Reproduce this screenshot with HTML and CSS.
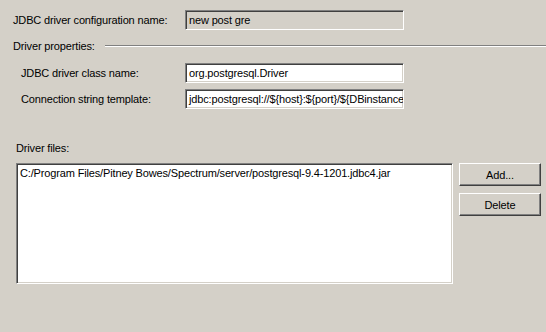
FILE: index.html
```html
<!DOCTYPE html>
<html>
<head>
<meta charset="utf-8">
<link rel="stylesheet" href="styles.css">
</head>
<body>
<div class="panel">
  <div class="row">
    <span class="label">JDBC driver configuration name:</span>
    <div class="field disabled">new post gre</div>
  </div>
  <div class="group">
    <span class="group-title">Driver properties:</span>
    <span class="sep"></span>
  </div>
  <div class="row indent first">
    <span class="label">JDBC driver class name:</span>
    <div class="field">org.postgresql.Driver</div>
  </div>
  <div class="row indent second">
    <span class="label">Connection string template:</span>
    <div class="field">jdbc:postgresql://${host}:${port}/${DBinstance}</div>
  </div>
  <div class="files-label">Driver files:</div>
  <div class="files">
    <div class="list">
      <div class="item">C:/Program Files/Pitney Bowes/Spectrum/server/postgresql-9.4-1201.jdbc4.jar</div>
    </div>
    <div class="buttons">
      <button class="btn">Add...</button>
      <button class="btn">Delete</button>
    </div>
  </div>
</div>
</body>
</html>
```
FILE: styles.css
```css
html, body {
  margin: 0;
  padding: 0;
  background: #d4d0c8;
  width: 546px;
  height: 332px;
  overflow: hidden;
}
body {
  font-family: "Liberation Sans", Arial, sans-serif;
  font-size: 11px;
  letter-spacing: -0.15px;
  color: #000;
}
.panel {
  padding: 10px 0 0 13px;
}
.row {
  display: flex;
  align-items: center;
  height: 20px;
}
.label {
  width: 172px;
  flex: none;
  white-space: nowrap;
}
.indent .label {
  padding-left: 8px;
  width: 164px;
}
.indent.first { margin-top: 9px; }
.indent.second { margin-top: 6px; }
.field {
  box-sizing: border-box;
  width: 219px;
  height: 20px;
  background: #fff;
  border-top: 1px solid #808080;
  border-left: 1px solid #808080;
  border-right: 1px solid #fff;
  border-bottom: 1px solid #fff;
  box-shadow: inset 1px 1px 0 #404040, inset -1px -1px 0 #d4d0c8;
  padding: 0 0 0 3px;
  line-height: 18px;
  white-space: nowrap;
  overflow: hidden;
}
.field.disabled {
  background: #d4d0c8;
}
.group {
  display: flex;
  align-items: center;
  height: 16px;
  margin-top: 8px;
}
.group-title {
  white-space: nowrap;
}
.sep {
  flex: 1;
  margin-left: 10px;
  height: 0;
  border-top: 1px solid #808080;
  border-bottom: 1px solid #fff;
}
.files-label {
  margin-top: 32px;
  margin-left: 3px;
  line-height: 14px;
}
.files {
  display: flex;
  align-items: flex-start;
  margin-top: 8px;
  margin-left: 3px;
}
.list {
  box-sizing: border-box;
  width: 437px;
  height: 121px;
  background: #fff;
  border-top: 1px solid #808080;
  border-left: 1px solid #808080;
  border-right: 1px solid #fff;
  border-bottom: 1px solid #fff;
  box-shadow: inset 1px 1px 0 #404040, inset -1px -1px 0 #d4d0c8;
  padding: 2px 0 0 3px;
}
.item {
  line-height: 14px;
  white-space: nowrap;
}
.buttons {
  display: flex;
  flex-direction: column;
  gap: 7px;
  margin-left: 6px;
}
.btn {
  box-sizing: border-box;
  width: 82px;
  height: 23px;
  margin: 0;
  padding: 0;
  font: inherit;
  letter-spacing: inherit;
  color: #000;
  background: #d4d0c8;
  border-top: 1px solid #fff;
  border-left: 1px solid #fff;
  border-right: 1px solid #404040;
  border-bottom: 1px solid #404040;
  box-shadow: inset -1px -1px 0 #808080;
  border-radius: 0;
}
```
